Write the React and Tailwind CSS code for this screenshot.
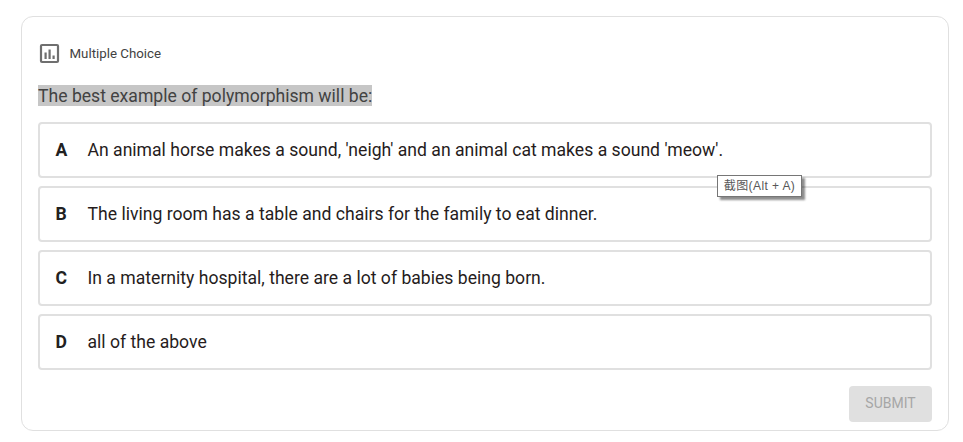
import React from "react";

const options = [
  { key: "A", text: "An animal horse makes a sound, 'neigh' and an animal cat makes a sound 'meow'." },
  { key: "B", text: "The living room has a table and chairs for the family to eat dinner." },
  { key: "C", text: "In a maternity hospital, there are a lot of babies being born." },
  { key: "D", text: "all of the above" },
];

const App = () => {
  return (
    <div className="relative h-[442px] w-[963px] overflow-hidden bg-white pt-4 pl-[21px] font-['Roboto',sans-serif]">
      <div className="h-[415px] w-[928px] rounded-xl border border-[#e0e0e0] px-4 pt-[27px]">
        <div className="flex h-5 items-center">
          <svg width="22" height="22" viewBox="0 0 22 22" className="ml-[1px] shrink-0">
            <rect x="2" y="2" width="17" height="17" rx="1" fill="none" stroke="#6f6f6f" strokeWidth="2.2" />
            <path d="M5.5 9.5h2.2v6.5H5.5zM9.5 6.5h2.2V16H9.5zM13.5 12.5h2.2V16h-2.2z" fill="#6f6f6f" />
          </svg>
          <span className="ml-[8.5px] text-[13.3px] text-[#424242]">Multiple Choice</span>
        </div>
        <h2 className="mt-[21px] h-[21px] text-[17.6px] font-normal text-[#424242]">
          <span className="inline-block h-[21px] bg-[#c6c6c6] align-top leading-[23px]">The best example of polymorphism will be:</span>
        </h2>
        <div className="mt-4 flex flex-col gap-2">
          {options.map((o) => (
            <div key={o.key} className="flex h-[56px] items-center rounded border-2 border-[#e0e0e0] pl-[15.5px] text-[17.6px] text-[#261c1c]">
              <span className="w-[32px] text-[17.6px] font-bold text-[#212121]">{o.key}</span>
              <span>{o.text}</span>
            </div>
          ))}
        </div>
        <div className="mt-4 flex justify-end">
          <button className="h-9 w-[83px] rounded bg-[#e0e0e0] pb-[1px] text-[14px] font-normal text-[#a6a6a6]">SUBMIT</button>
        </div>
      </div>
      <div className="absolute top-[175px] left-[717px] flex h-[22px] w-[85px] items-center justify-center border border-[#767676] bg-white font-['Liberation_Sans','Noto_Sans_CJK_SC',sans-serif] text-[12px] tracking-[0.4px] text-[#575757] shadow-[3px_3px_2px_rgba(0,0,0,0.45)]">
        截图(Alt + A)
      </div>
    </div>
  );
};

export default App;
